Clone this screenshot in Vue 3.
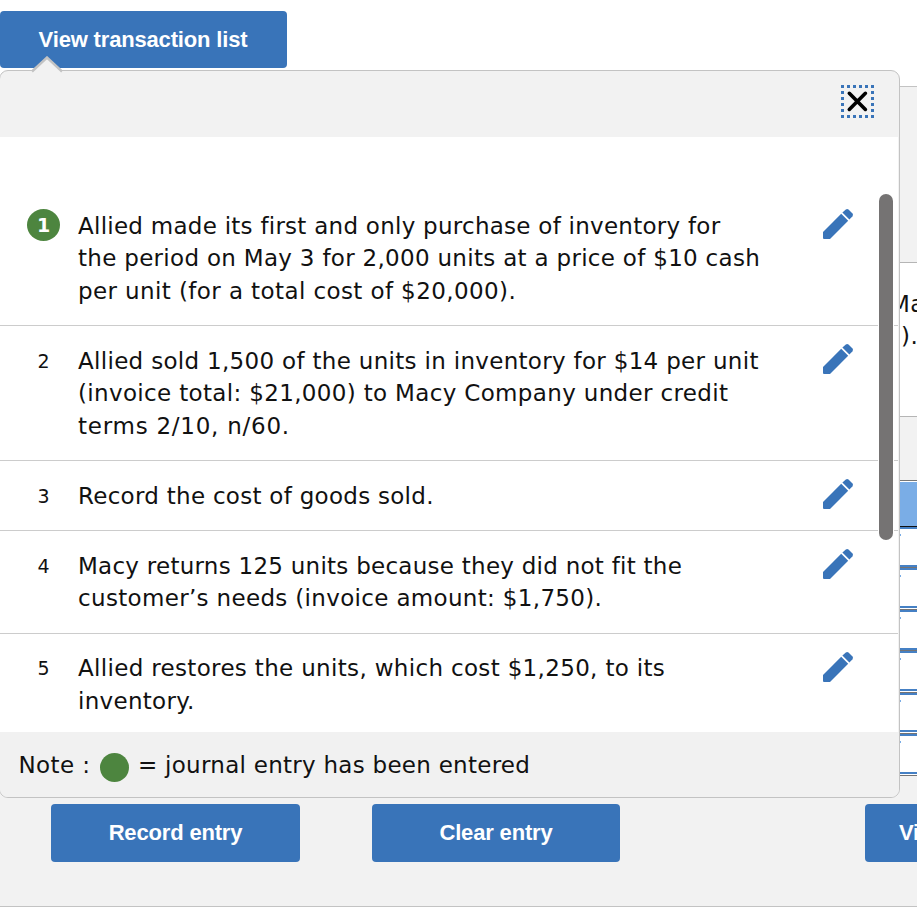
<template>
  <div class="page">
    <button class="btn view-btn">View transaction list</button>

    <div class="worksheet">
      <div class="sheet-head"></div>
      <div class="sheet-text">
        <div>Ma</div>
        <div class="second">0).</div>
      </div>
      <div class="sheet-gap"></div>
      <div class="journal">
        <div class="journal-head"></div>
        <div v-for="(row, i) in journalRows" :key="i" class="journal-row" :class="row">
          <div class="cell"></div>
        </div>
      </div>
      <div class="actions">
        <button class="btn record">Record entry</button>
        <button class="btn clear">Clear entry</button>
        <button class="btn general">View general journal</button>
      </div>
    </div>

    <div class="popup">
      <svg class="caret" width="32" height="17" viewBox="0 0 32 17">
        <path d="M1 15.5 L16 1 L31 15.5 V17 H1 Z" fill="#f2f2f2" />
        <path d="M1 15.5 L16 1.5 L31 15.5" fill="none" stroke="#c3c3c3" stroke-width="2.4" />
      </svg>
      <div class="popup-head">
        <button class="close" aria-label="Close">
          <svg width="33" height="33" viewBox="0 0 33 33" fill="none">
            <rect x="1.5" y="1.5" width="30" height="30" stroke="#3974b9" stroke-width="3" stroke-dasharray="3 3" stroke-dashoffset="1.5" />
            <path d="M8.3 8.3 L24.4 24.4 M24.4 8.3 L8.3 24.4" stroke="#000" stroke-width="3.6" stroke-linecap="round" />
          </svg>
        </button>
      </div>

      <div class="list">
        <div v-for="t in transactions" :key="t.id" class="item">
          <div class="num-col">
            <span class="num" :class="{ done: t.done }">{{ t.id }}</span>
          </div>
          <div class="desc">
            <div v-for="line in t.lines" :key="line.text" :style="{ letterSpacing: line.gap + 'px' }">{{ line.text }}</div>
          </div>
          <svg class="pencil" width="32" height="32" viewBox="0 0 32 32" fill="#3974b9">
            <path d="M1 24 L19.2 5.8 L26.2 12.8 L8 31 H2 Q1 31 1 30 Z" />
            <path d="M20.4 4.6 L23.8 1.5 Q25.2 .4 26.5 1.5 L30.5 5.5 Q31.6 6.8 30.5 8.2 L27.4 11.6 Z" />
          </svg>
        </div>
        <div class="scrollbar"></div>
      </div>

      <div class="note">
        <span>Note :</span>
        <i class="dot"></i>
        <span class="legend">= journal entry has been entered</span>
      </div>
    </div>
  </div>
</template>

<script setup>
import { ref } from 'vue'

// gap: letter spacing of the line in px
const transactions = ref([
  {
    id: 1,
    done: true,
    lines: [
      { text: 'Allied made its first and only purchase of inventory for', gap: 0.26 },
      { text: 'the period on May 3 for 2,000 units at a price of $10 cash', gap: 0.3 },
      { text: 'per unit (for a total cost of $20,000).', gap: 0.4 }
    ]
  },
  {
    id: 2,
    lines: [
      { text: 'Allied sold 1,500 of the units in inventory for $14 per unit', gap: 0.31 },
      { text: '(invoice total: $21,000) to Macy Company under credit', gap: 0.34 },
      { text: 'terms 2/10, n/60.', gap: 0.75 }
    ]
  },
  {
    id: 3,
    lines: [{ text: 'Record the cost of goods sold.', gap: 0.28 }]
  },
  {
    id: 4,
    lines: [
      { text: 'Macy returns 125 units because they did not fit the', gap: 0.26 },
      { text: 'customer’s needs (invoice amount: $1,750).', gap: 0.33 }
    ]
  },
  {
    id: 5,
    lines: [
      { text: 'Allied restores the units, which cost $1,250, to its', gap: 0.33 },
      { text: 'inventory.', gap: 0.3 }
    ]
  }
])

const journalRows = ['tight', 'loose', 'tight', 'loose', 'short', 'loose']
</script>

<style>
body {
  background: #fff;
}
</style>

<style scoped>
.page {
  position: relative;
  width: 917px;
  height: 913px;
  padding-top: 11px;
  box-sizing: border-box;
  overflow: hidden;
  font-family: Verdana, "DejaVu Sans", sans-serif;
  font-size: 23px;
  line-height: 32.5px;
  letter-spacing: 0.4px;
  color: #111;
}

.btn {
  display: block;
  flex: none;
  height: 58px;
  padding: 0;
  border: 0;
  border-radius: 4px;
  background: #3974b9;
  color: #fff;
  font: bold 22px "Liberation Sans", Arial, sans-serif;
  letter-spacing: -0.17px;
  white-space: nowrap;
}

.view-btn {
  width: 287px;
  height: 57px;
  padding-right: 1px;
}

.worksheet {
  margin-top: 18px;
  height: 821px;
  box-sizing: border-box;
  border-top: 1px solid #c3c3c3;
  border-bottom: 1px solid #c3c3c3;
  background: #f2f2f2;
}

.sheet-head {
  height: 175px;
}

.sheet-text {
  height: 155px;
  box-sizing: border-box;
  padding: 24.5px 0 0 890px;
  border-top: 1px solid #b5b5b5;
  border-bottom: 1px solid #b5b5b5;
  background: #fff;
  white-space: nowrap;
}

.second {
  margin-left: -4px;
}

.sheet-gap {
  height: 63px;
}

.journal {
  background: #fff;
}

.journal-head {
  height: 47px;
  box-sizing: border-box;
  border-top: 1px solid #777;
  border-bottom: 1px solid #111;
  background: linear-gradient(#fff 1px, #7aade6 1px);
}

.journal-row {
  height: 42px;
  box-sizing: border-box;
  border-bottom: 1px solid #757373;
}

.journal-row.tight,
.journal-row.short {
  height: 41px;
}

.cell {
  position: relative;
  height: 40px;
  box-sizing: border-box;
  border-top: 2px solid #4580c4;
  border-bottom: 2px solid #4580c4;
}

.short .cell {
  height: 39px;
}

.cell::before {
  content: '';
  position: absolute;
  left: 900px;
  top: 5px;
  width: 1px;
  height: 2px;
  background: #7aade6;
}

.actions {
  display: flex;
  padding: 28px 0 0 51px;
}

.record {
  width: 249px;
}

.clear {
  width: 248px;
  margin-left: 72px;
}

.general {
  width: 280px;
  margin-left: 245px;
  padding-left: 34px;
  text-align: left;
}

.popup {
  position: absolute;
  left: -1px;
  top: 70px;
  width: 901px;
  height: 728px;
  box-sizing: border-box;
  display: flex;
  flex-direction: column;
  border: 1px solid #c3c3c3;
  border-radius: 9px;
  background: #f2f2f2;
}

.caret {
  position: absolute;
  left: 31px;
  top: -15px;
}

.popup-head {
  display: flex;
  justify-content: flex-end;
  height: 66px;
  box-sizing: border-box;
  padding: 14px 25px 0 0;
}

.close {
  width: 33px;
  height: 33px;
  padding: 0;
  border: 0;
  background: none;
}

.close svg,
.pencil {
  display: block;
}

.list {
  position: relative;
  height: 595px;
  box-sizing: border-box;
  margin-right: 1px;
  padding-top: 54px;
  overflow: hidden;
  background: #fff;
}

.item {
  display: flex;
  padding: 18.5px 0 18px;
  border-bottom: 1px solid #ccc;
}

.num-col {
  width: 78px;
  padding-left: 27px;
  box-sizing: border-box;
}

.num {
  display: block;
  width: 33px;
  height: 32px;
  border-radius: 50%;
  text-align: center;
  font-size: 19px;
  line-height: 33px;
  letter-spacing: 0;
}

.num.done {
  margin-top: -0.5px;
  background: #4d853f;
  color: #fff;
  font-weight: bold;
}

.desc {
  width: 744px;
  white-space: nowrap;
}

.pencil {
  flex: none;
  margin-top: -1.5px;
}

.scrollbar {
  position: absolute;
  left: 879px;
  top: 57px;
  width: 14px;
  height: 346px;
  border-radius: 7px;
  background: #757373;
  box-shadow: 0 0 0 1px #fff;
}

.note {
  display: flex;
  align-items: center;
  flex: 1;
  padding: 1px 0 0 18.5px;
  border-radius: 0 0 8px 8px;
  background: #f1f1f1;
  white-space: nowrap;
}

.dot {
  width: 29px;
  height: 29px;
  margin: 5px 9px 0 9.6px;
  border-radius: 50%;
  background: #4d853f;
}

.legend {
  letter-spacing: 0.27px;
}
</style>
